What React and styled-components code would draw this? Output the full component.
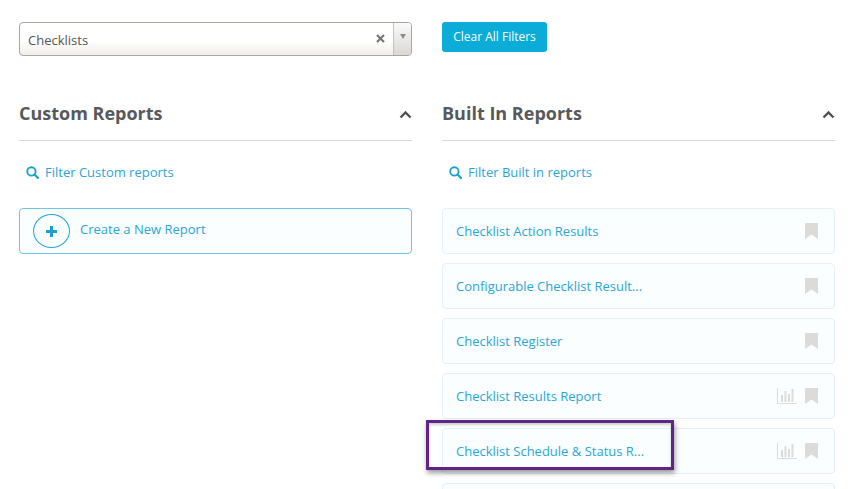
import React from 'react'
import styled, { createGlobalStyle } from 'styled-components'

const GlobalStyle = createGlobalStyle`
    html, body {
        margin: 0;
        padding: 0;
        height: 489px;
        overflow: hidden;
        background: #fff;
        font-family: "Open Sans", "Liberation Sans", sans-serif;
    }
`

const Page = styled.div`
    display: grid;
    grid-template-columns: 393px 393px;
    column-gap: 30px;
    box-sizing: border-box;
    height: 489px;
    overflow: hidden;
    padding: 22px 0 0 19px;
`

const Column = styled.div`
    display: flex;
    flex-direction: column;
`

const TopRow = styled.div`
    height: 34px;
    margin-bottom: 40px;
`

const Select = styled.div`
    display: flex;
    align-items: stretch;
    box-sizing: border-box;
    height: 34px;
    border: 1px solid #aaa69f;
    border-radius: 4px;
    background: linear-gradient(#fff 55%, #efeeeb);
    overflow: hidden;
`

const SelectValue = styled.div`
    flex: 1;
    padding: 8px 0 0 8px;
    font-size: 13px;
    line-height: 18px;
    color: #555;
`

const ClearX = styled.svg`
    width: 9px;
    height: 9px;
    margin: 11px 8px 0 0;
`

const SelectArrow = styled.div`
    display: flex;
    justify-content: center;
    width: 18px;
    padding-top: 11px;
    box-sizing: border-box;
    border-left: 1px solid #c4c2bd;
    background: linear-gradient(#fafafa, #d9d8d4);

    &::after {
        content: "";
        width: 0;
        height: 0;
        border-left: 3.5px solid transparent;
        border-right: 3.5px solid transparent;
        border-top: 5px solid #8f8d89;
    }
`

const ClearButton = styled.button`
    display: block;
    width: 105px;
    height: 30px;
    padding: 0;
    border: 0;
    border-radius: 3px;
    background: #0cacd8;
    color: #fff;
    font-family: inherit;
    font-size: 12px;
    line-height: 28px;
    text-align: center;
`

const SectionHeader = styled.div`
    display: flex;
    align-items: center;
    justify-content: space-between;
    height: 44px;
    border-bottom: 1px solid #d8d8d8;
    margin-bottom: 19px;
`

const SectionTitle = styled.h2`
    margin: 0 0 10px;
    font-size: 18px;
    line-height: 24px;
    font-weight: 700;
    color: #58595b;
`

const Chevron = styled.svg`
    width: 13px;
    height: 9px;
    margin: 0 0 8px;
`

const FilterRow = styled.div`
    display: flex;
    align-items: center;
    gap: 6px;
    height: 24px;
    padding-left: 7px;
    margin-bottom: 24px;
    font-size: 13px;
    color: #2ba6d4;
`

const SearchIcon = styled.svg`
    width: 13px;
    height: 13px;
`

const CreateCard = styled.div`
    display: flex;
    align-items: center;
    gap: 10px;
    box-sizing: border-box;
    height: 46px;
    padding: 0 0 0 13px;
    border: 1px solid #6cc5ea;
    border-radius: 4px;
    background: #fafeff;
    font-size: 13px;
    color: #2ba6d4;
`

const CreateLabel = styled.span`
    padding-bottom: 4px;
`

const PlusCircle = styled.div`
    display: flex;
    align-items: center;
    justify-content: center;
    box-sizing: border-box;
    width: 37px;
    height: 34px;
    border: 1px solid #22a7d4;
    border-radius: 50%;
`

const ReportList = styled.div`
    display: flex;
    flex-direction: column;
    gap: 9px;
`

const ReportCard = styled.div`
    position: relative;
    display: flex;
    align-items: center;
    box-sizing: border-box;
    height: 46px;
    padding: 0 16px 0 13px;
    border: 1px solid #e3f1f8;
    border-radius: 4px;
    background: #fafeff;
    font-size: 13px;
    color: #2ba6d4;
`

const ReportName = styled.span`
    flex: 1;
`

const ChartIcon = styled.svg`
    width: 20px;
    height: 16px;
    margin-right: 8px;
`

const BookmarkIcon = styled.svg`
    width: 13px;
    height: 16px;
`

const Highlight = styled.div`
    position: absolute;
    left: -17px;
    top: -9px;
    width: 248px;
    height: 50px;
    box-sizing: border-box;
    border: 3px solid #5f2586;
    box-shadow: 1px 3px 5px rgba(0, 0, 0, 0.4), inset 0 2px 3px rgba(0, 0, 0, 0.2);
`

const Search = () => (
    <SearchIcon viewBox="0 0 13 13">
        <circle cx="5.4" cy="5.4" r="4.2" fill="none" stroke="#1f9fcb" strokeWidth="1.9" />
        <path d="M8.5 8.5 L12 12" stroke="#1f9fcb" strokeWidth="2.2" strokeLinecap="round" />
    </SearchIcon>
)

const Up = () => (
    <Chevron viewBox="0 0 13 9">
        <path d="M1.5 7.5 L6.5 2.5 L11.5 7.5" fill="none" stroke="#4f5152" strokeWidth="2.4" />
    </Chevron>
)

const Bookmark = () => (
    <BookmarkIcon viewBox="0 0 13 16">
        <path d="M0 0 H13 V16 L6.5 11.5 L0 16 Z" fill="#dddbd7" />
    </BookmarkIcon>
)

const Chart = () => (
    <ChartIcon viewBox="0 0 20 16">
        <path d="M0.5 0 V15.5 H20" fill="none" stroke="#dddbd7" />
        <rect x="4" y="7" width="2" height="7" fill="#dddbd7" />
        <rect x="7.5" y="3" width="2" height="11" fill="#dddbd7" />
        <rect x="11" y="6" width="2" height="8" fill="#dddbd7" />
        <rect x="14.5" y="1" width="2" height="13" fill="#dddbd7" />
    </ChartIcon>
)

const reports = [
    { name: 'Checklist Action Results' },
    { name: 'Configurable Checklist Result...' },
    { name: 'Checklist Register' },
    { name: 'Checklist Results Report', chart: true },
    { name: 'Checklist Schedule & Status R...', chart: true, highlighted: true },
    { name: '' },
]

function App() {
    return (
        <Page>
            <GlobalStyle />
            <Column>
                <TopRow>
                    <Select>
                        <SelectValue>Checklists</SelectValue>
                        <ClearX viewBox="0 0 9 9">
                            <path d="M1 1 L8 8 M8 1 L1 8" stroke="#777" strokeWidth="2.2" />
                        </ClearX>
                        <SelectArrow />
                    </Select>
                </TopRow>
                <SectionHeader>
                    <SectionTitle>Custom Reports</SectionTitle>
                    <Up />
                </SectionHeader>
                <FilterRow>
                    <Search />
                    Filter Custom reports
                </FilterRow>
                <CreateCard>
                    <PlusCircle>
                        <svg width="11" height="11" viewBox="0 0 11 11">
                            <path d="M5.5 0 V11 M0 5.5 H11" stroke="#1f9fcb" strokeWidth="3" />
                        </svg>
                    </PlusCircle>
                    <CreateLabel>Create a New Report</CreateLabel>
                </CreateCard>
            </Column>
            <Column>
                <TopRow>
                    <ClearButton>Clear All Filters</ClearButton>
                </TopRow>
                <SectionHeader>
                    <SectionTitle>Built In Reports</SectionTitle>
                    <Up />
                </SectionHeader>
                <FilterRow>
                    <Search />
                    Filter Built in reports
                </FilterRow>
                <ReportList>
                    {reports.map((report, index) => (
                        <ReportCard key={index}>
                            <ReportName>{report.name}</ReportName>
                            {report.chart && <Chart />}
                            {report.name && <Bookmark />}
                            {report.highlighted && <Highlight />}
                        </ReportCard>
                    ))}
                </ReportList>
            </Column>
        </Page>
    )
}

export default App
